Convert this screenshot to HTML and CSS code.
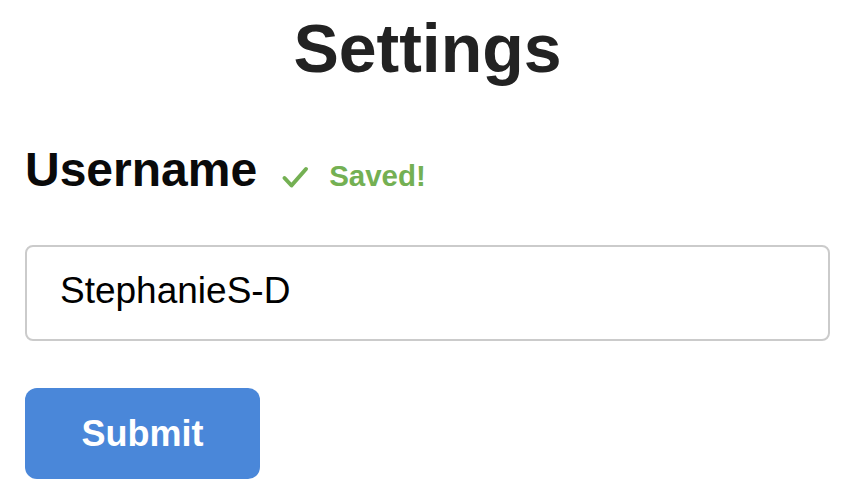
FILE: index.html
```html
<!DOCTYPE html>
<html lang="en">
<head>
<meta charset="utf-8">
<title>Settings</title>
<link rel="stylesheet" href="styles.css">
</head>
<body>
<main class="settings">
  <h1 class="title">Settings</h1>
  <form class="form">
    <div class="label-row">
      <label class="label" for="username">Username</label>
      <span class="status">
        <svg class="check" width="28" height="24" viewBox="0 0 28 24" aria-hidden="true">
          <path d="M3.5 13 L10.5 20.5 L25 4" fill="none" stroke="#74b053" stroke-width="4" stroke-linecap="round" stroke-linejoin="round"/>
        </svg>
        <span class="saved">Saved!</span>
      </span>
    </div>
    <input class="input" id="username" type="text" value="StephanieS-D">
    <button class="submit" type="button">Submit</button>
  </form>
</main>
</body>
</html>
```
FILE: styles.css
```css
html, body {
  margin: 0;
  padding: 0;
  background: #fff;
}

body {
  font-family: "Liberation Sans", Arial, Helvetica, sans-serif;
}

.settings {
  width: 805px;
  padding: 0 25px;
  box-sizing: content-box;
}

.title {
  margin: 14px 0 0;
  font-size: 68px;
  line-height: 68px;
  font-weight: 700;
  color: #222;
  text-align: center;
}

.form {
  display: flex;
  flex-direction: column;
  align-items: flex-start;
  margin-top: 64px;
}

.label-row {
  display: flex;
  align-items: baseline;
  height: 48px;
}

.label {
  font-size: 48px;
  line-height: 48px;
  font-weight: 700;
  color: #0a0a0a;
}

.status {
  display: flex;
  align-items: baseline;
  margin-left: 24px;
}

.check {
  align-self: flex-end;
  margin-bottom: 4px;
}

.saved {
  margin-left: 20px;
  font-size: 29.5px;
  font-weight: 700;
  color: #74b053;
}

.input {
  margin-top: 51px;
  width: 805px;
  height: 96px;
  box-sizing: border-box;
  border: 2px solid #cbcbcb;
  border-radius: 8px;
  padding: 0 33px 4px;
  font-family: "Liberation Sans", Arial, Helvetica, sans-serif;
  font-size: 37px;
  color: #000;
  background: #fff;
  outline: none;
}

.submit {
  margin-top: 47px;
  width: 235px;
  height: 91px;
  border: none;
  border-radius: 12px;
  background: #4a87d9;
  color: #fff;
  font-family: "Liberation Sans", Arial, Helvetica, sans-serif;
  font-size: 36px;
  font-weight: 700;
  padding: 0;
  cursor: pointer;
}
```
